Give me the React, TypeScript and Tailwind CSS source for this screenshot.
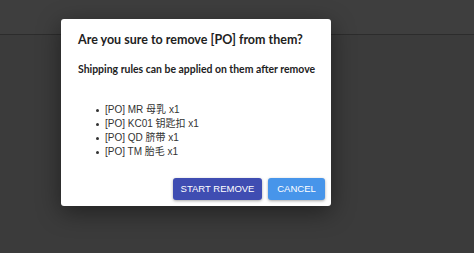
import React from "react";

const items = ["[PO] MR 母乳 x1", "[PO] KC01 钥匙扣 x1", "[PO] QD 脐带 x1", "[PO] TM 胎毛 x1"];

export default function App() {
  return (
    <div className="relative h-[253px] w-[474px] overflow-hidden bg-[#3b3b3b]">
      {/* page behind the modal */}
      <div className="h-[35px] border-b border-[#2c2c2c] bg-[#3e3e3e]" />

      {/* Modal */}
      <div className="absolute left-[61px] top-[19px] flex h-[187px] w-[270px] flex-col rounded-[3px] bg-white shadow-[0_6px_24px_rgba(0,0,0,0.45)]">
        <div className="px-[17px] pt-[12px]">
          <h2 className="whitespace-nowrap text-[12.5px] font-bold leading-[18px] text-[#222] [font-family:Lato,sans-serif]">
            Are you sure to remove [PO] from them?
          </h2>
          <p className="mt-[13px] whitespace-nowrap text-[10.45px] font-bold leading-[14px] text-[#222] [font-family:Lato,sans-serif]">
            Shipping rules can be applied on them after remove
          </p>
          <ul className="mt-[27px] pl-[18px] text-[10px] leading-[14px] text-[#333] [font-family:'Liberation_Sans','Noto_Sans_CJK_SC',sans-serif]">
            {items.map((it) => (
              <li key={it} className="flex items-center whitespace-nowrap">
                <span className="mr-[6px] inline-block h-[3px] w-[3px] rounded-full bg-[#333]" />
                {it}
              </li>
            ))}
          </ul>
        </div>
        <div className="mt-auto flex justify-end gap-[6px] px-[6px] pb-[6px]">
          <button className="h-[22px] w-[89px] rounded-[3px] bg-[#3f4db2] text-[9.5px] font-medium uppercase text-white shadow-[0_1px_3px_rgba(0,0,0,0.35)] [font-family:'Liberation_Sans',sans-serif]">
            Start Remove
          </button>
          <button className="h-[22px] w-[57px] rounded-[3px] bg-[#4795ea] text-[9.5px] font-medium uppercase text-white shadow-[0_1px_3px_rgba(0,0,0,0.35)] [font-family:'Liberation_Sans',sans-serif]">
            Cancel
          </button>
        </div>
      </div>
    </div>
  );
}
